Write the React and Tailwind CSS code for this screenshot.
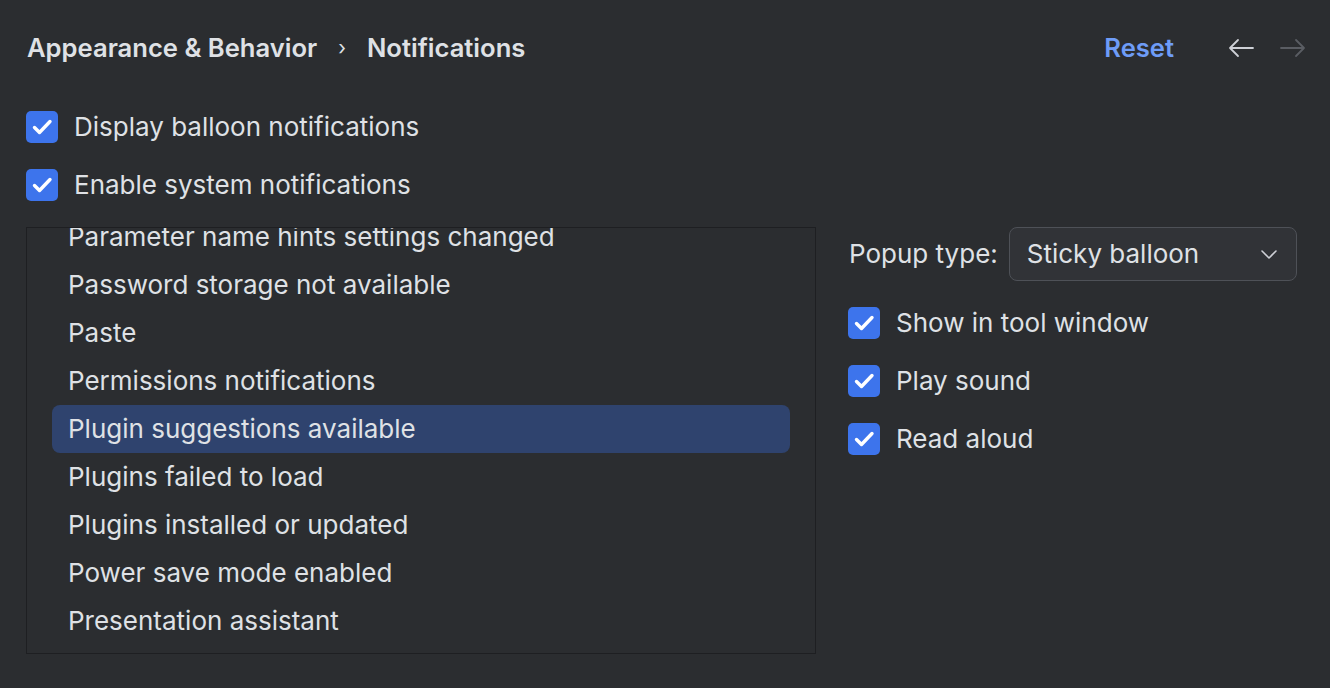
import React from "react";

const items = [
  "Parameter name hints settings changed",
  "Password storage not available",
  "Paste",
  "Permissions notifications",
  "Plugin suggestions available",
  "Plugins failed to load",
  "Plugins installed or updated",
  "Power save mode enabled",
  "Presentation assistant",
];

const Check = () => (
  <span className="w-8 h-8 rounded-[5px] bg-[#3d74ec] flex items-center justify-center shrink-0">
    <svg width="32" height="32" viewBox="0 0 32 32" fill="none">
      <path d="M8.5 16.5l5 5L24 10.5" stroke="#fff" strokeWidth="3.4" strokeLinecap="round" strokeLinejoin="round" />
    </svg>
  </span>
);

const CheckRow = ({ label }) => (
  <div className="flex items-center gap-[16px] h-8">
    <Check />
    <span className="text-[26px] text-[#dfe1e5] mt-[-2px]">{label}</span>
  </div>
);

const App = () => {
  return (
    <div
      className="w-[1330px] h-[688px] bg-[#2b2d30] overflow-hidden text-[#dfe1e5]"
      style={{ fontFamily: "Inter, 'Noto Sans', sans-serif" }}
    >
      {/* header */}
      <div className="flex items-center h-[48px] mt-[24px] pl-[27px] pr-[24px]">
        <span className="text-[25.6px] font-semibold">Appearance &amp; Behavior</span>
        <span className="text-[20px] mx-[21px] text-[#dfe1e5]">›</span>
        <span className="text-[25.6px] font-semibold">Notifications</span>
        <div className="flex-1" />
        <span className="text-[25.6px] font-semibold text-[#6e9cf7]">Reset</span>
        <svg className="ml-[54px]" width="26" height="20" viewBox="0 0 26 20" fill="none">
          <path d="M25 10H2M10 2L2 10l8 8" stroke="#ced0d6" strokeWidth="1.8" strokeLinecap="round" strokeLinejoin="round" />
        </svg>
        <svg className="ml-[26px]" width="26" height="20" viewBox="0 0 26 20" fill="none">
          <path d="M1 10h23M16 2l8 8-8 8" stroke="#5a5d63" strokeWidth="1.8" strokeLinecap="round" strokeLinejoin="round" />
        </svg>
      </div>

      <div className="pl-[26px] mt-[39px] flex flex-col gap-[26px]">
        <CheckRow label="Display balloon notifications" />
        <CheckRow label="Enable system notifications" />
      </div>

      <div className="flex mt-[26px] pl-[26px]">
        {/* list */}
        <div className="w-[790px] h-[427px] border border-[#1e1f22] overflow-hidden">
          <div className="mt-[-15px] px-[25px]">
            {items.map((it, i) => (
              <div
                key={i}
                className={
                  "h-[48px] flex items-center px-[16px] rounded-[8px] text-[26px] " +
                  (i === 4 ? "bg-[#2f436e]" : "")
                }
              >
                <span className="mt-[-1px]">{it}</span>
              </div>
            ))}
          </div>
        </div>

        {/* right side */}
        <div className="pl-[32px] flex flex-col">
          <div className="flex items-center">
            <span className="text-[26px] ml-[1px] mt-[-1px]">Popup type:</span>
            <div className="ml-[11px] w-[288px] h-[54px] rounded-[8px] border border-[#4e5157] bg-[#313337] flex items-center pl-[17px] pr-[18px]">
              <span className="text-[26px] flex-1 mt-[-1px]">Sticky balloon</span>
              <svg width="18" height="12" viewBox="0 0 18 12" fill="none">
                <path d="M2 3l7 7 7-7" stroke="#ced0d6" strokeWidth="1.6" strokeLinecap="round" strokeLinejoin="round" />
              </svg>
            </div>
          </div>
          <div className="flex flex-col gap-[26px] mt-[26px]">
            <CheckRow label="Show in tool window" />
            <CheckRow label="Play sound" />
            <CheckRow label="Read aloud" />
          </div>
        </div>
      </div>
    </div>
  );
};

export default App;
